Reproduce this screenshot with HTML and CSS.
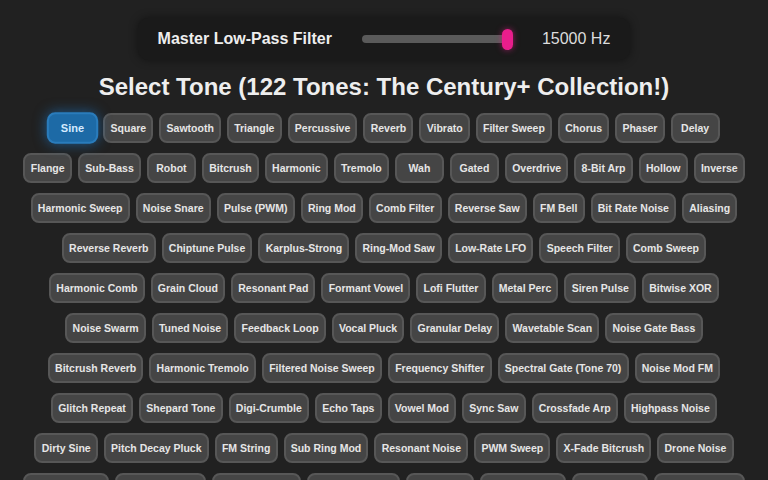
FILE: index.html
```html
<!DOCTYPE html>
<html lang="en">
<head>
<meta charset="utf-8">
<title>Tone Selector</title>
<link rel="stylesheet" href="styles.css">
</head>
<body>
<div class="filter-panel">
  <span class="filter-label">Master Low-Pass Filter</span>
  <div class="slider">
    <div class="slider-track"></div>
    <div class="slider-thumb"></div>
  </div>
  <span class="filter-value">15000 Hz</span>
</div>
<h2 class="title">Select Tone (122 Tones: The Century+ Collection!)</h2>
<div class="tones">
  <button class="tone active">Sine</button>
  <button class="tone">Square</button>
  <button class="tone">Sawtooth</button>
  <button class="tone">Triangle</button>
  <button class="tone">Percussive</button>
  <button class="tone">Reverb</button>
  <button class="tone">Vibrato</button>
  <button class="tone">Filter Sweep</button>
  <button class="tone">Chorus</button>
  <button class="tone">Phaser</button>
  <button class="tone">Delay</button>
  <button class="tone">Flange</button>
  <button class="tone">Sub-Bass</button>
  <button class="tone">Robot</button>
  <button class="tone">Bitcrush</button>
  <button class="tone">Harmonic</button>
  <button class="tone">Tremolo</button>
  <button class="tone">Wah</button>
  <button class="tone">Gated</button>
  <button class="tone">Overdrive</button>
  <button class="tone">8-Bit Arp</button>
  <button class="tone">Hollow</button>
  <button class="tone">Inverse</button>
  <button class="tone">Harmonic Sweep</button>
  <button class="tone">Noise Snare</button>
  <button class="tone">Pulse (PWM)</button>
  <button class="tone">Ring Mod</button>
  <button class="tone">Comb Filter</button>
  <button class="tone">Reverse Saw</button>
  <button class="tone">FM Bell</button>
  <button class="tone">Bit Rate Noise</button>
  <button class="tone">Aliasing</button>
  <button class="tone">Reverse Reverb</button>
  <button class="tone">Chiptune Pulse</button>
  <button class="tone">Karplus-Strong</button>
  <button class="tone">Ring-Mod Saw</button>
  <button class="tone">Low-Rate LFO</button>
  <button class="tone">Speech Filter</button>
  <button class="tone">Comb Sweep</button>
  <button class="tone">Harmonic Comb</button>
  <button class="tone">Grain Cloud</button>
  <button class="tone">Resonant Pad</button>
  <button class="tone">Formant Vowel</button>
  <button class="tone">Lofi Flutter</button>
  <button class="tone">Metal Perc</button>
  <button class="tone">Siren Pulse</button>
  <button class="tone">Bitwise XOR</button>
  <button class="tone">Noise Swarm</button>
  <button class="tone">Tuned Noise</button>
  <button class="tone">Feedback Loop</button>
  <button class="tone">Vocal Pluck</button>
  <button class="tone">Granular Delay</button>
  <button class="tone">Wavetable Scan</button>
  <button class="tone">Noise Gate Bass</button>
  <button class="tone">Bitcrush Reverb</button>
  <button class="tone">Harmonic Tremolo</button>
  <button class="tone">Filtered Noise Sweep</button>
  <button class="tone">Frequency Shifter</button>
  <button class="tone">Spectral Gate (Tone 70)</button>
  <button class="tone">Noise Mod FM</button>
  <button class="tone">Glitch Repeat</button>
  <button class="tone">Shepard Tone</button>
  <button class="tone">Digi-Crumble</button>
  <button class="tone">Echo Taps</button>
  <button class="tone">Vowel Mod</button>
  <button class="tone">Sync Saw</button>
  <button class="tone">Crossfade Arp</button>
  <button class="tone">Highpass Noise</button>
  <button class="tone">Dirty Sine</button>
  <button class="tone">Pitch Decay Pluck</button>
  <button class="tone">FM String</button>
  <button class="tone">Sub Ring Mod</button>
  <button class="tone">Resonant Noise</button>
  <button class="tone">PWM Sweep</button>
  <button class="tone">X-Fade Bitcrush</button>
  <button class="tone">Drone Noise</button>
  <button class="tone">Detuned Saws</button>
  <button class="tone">Granular Drone</button>
  <button class="tone">Sample &amp; Hold</button>
  <button class="tone">Organ Shimmer</button>
  <button class="tone">Hyper Saw</button>
  <button class="tone">Reverse Pluck</button>
  <button class="tone">Sine Chords</button>
  <button class="tone">Pulse Arpeggio</button>
  <button class="tone">Stereo Ping-Pong Delay</button>
  <button class="tone">Ambient Shimmer</button>
  <button class="tone">Tape Stop</button>
  <button class="tone">Glass Bell</button>
  <button class="tone">Laser Zap</button>
</div>
</body>
</html>
```
FILE: styles.css
```css
html, body {
  background: #212121;
}
body {
  margin: 0;
  padding: 18px 0 20px;
  color: #eeeeee;
  font-family: "Liberation Sans", Arial, sans-serif;
}
.filter-panel {
  width: max-content;
  margin: 0 auto;
  height: 42px;
  padding: 0 20px;
  display: flex;
  align-items: center;
  gap: 30px;
  background: #1a1a1a;
  border-radius: 10px;
  box-shadow: 0 0 10px rgba(0, 0, 0, 0.45);
}
.filter-label {
  font-size: 16px;
  font-weight: bold;
  color: #eeeeee;
}
.slider {
  position: relative;
  width: 150px;
  height: 20px;
  display: flex;
  align-items: center;
}
.slider-track {
  width: 100%;
  height: 8px;
  border-radius: 4px;
  background: #5a5a5a;
}
.slider-thumb {
  position: absolute;
  left: 140px;
  top: 0;
  width: 11px;
  height: 21px;
  border-radius: 6px;
  background: #e91e8c;
  box-shadow: 0 0 6px rgba(233, 30, 140, 0.6);
}
.filter-value {
  font-size: 16px;
  color: #dddddd;
}
.title {
  margin: 13px 0 12px;
  font-size: 24px;
  line-height: 28px;
  font-weight: bold;
  text-align: center;
  color: #eeeeee;
}
.tones {
  width: 725px;
  margin: 0 auto;
  display: flex;
  flex-wrap: wrap;
  justify-content: center;
  gap: 10px 6px;
}
.tone {
  box-sizing: border-box;
  min-width: 49px;
  height: 30px;
  padding: 0 5.2px;
  border: 2px solid #575757;
  border-radius: 8px;
  background: #454545;
  color: #e6e6e6;
  font-family: "Liberation Sans", Arial, sans-serif;
  font-size: 10.5px;
  font-weight: bold;
  line-height: 14px;
  white-space: nowrap;
  cursor: pointer;
}
.tone.active {
  transform: scale(1.05);
  background: #1d6aa6;
  border-color: #2a7cbc;
  color: #d4eaff;
  box-shadow: 0 0 12px rgba(30, 136, 229, 0.55);
}
```
